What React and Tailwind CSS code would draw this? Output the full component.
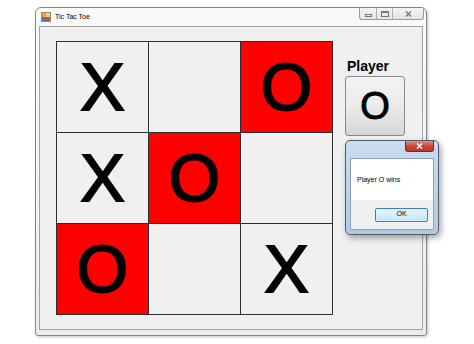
import React from "react";

const cells = [
  { v: "X", red: false },
  { v: "", red: false },
  { v: "O", red: true },
  { v: "X", red: false },
  { v: "O", red: true },
  { v: "", red: false },
  { v: "O", red: true },
  { v: "", red: false },
  { v: "X", red: false },
];

function FormIcon() {
  return (
    <svg width="10" height="10" viewBox="0 0 10 10">
      <rect x="0.5" y="0.5" width="9" height="9" fill="#fff" stroke="#8a8a8a" />
      <rect x="1" y="1" width="4" height="4" fill="#e8a33a" />
      <rect x="5" y="1" width="4" height="4" fill="#f4d35a" />
      <rect x="1" y="5" width="4" height="4" fill="#3a7fd0" />
      <rect x="5" y="5" width="4" height="4" fill="#d84a3a" />
    </svg>
  );
}

function TitleButtons() {
  return (
    <div className="flex h-[12px] rounded-b-[3px] border border-t-0 border-[#9a9a9a] bg-gradient-to-b from-[#f4f4f4] to-[#e4e4e4] overflow-hidden">
      <div className="w-[17px] flex items-center justify-center border-r border-[#b0b0b0]">
        <div className="w-[7px] h-[3px] border border-[#777] mt-[3px]" />
      </div>
      <div className="w-[16px] flex items-center justify-center border-r border-[#b0b0b0]">
        <div className="w-[8px] h-[6px] border border-[#777] border-t-2" />
      </div>
      <div className="w-[30px] flex items-center justify-center">
        <svg width="7" height="6" viewBox="0 0 7 6">
          <path d="M1 0.5 L6 5.5 M6 0.5 L1 5.5" stroke="#777" strokeWidth="1.4" />
        </svg>
      </div>
    </div>
  );
}

function MessageBox() {
  return (
    <div className="absolute left-[345px] top-[140px] w-[94px] h-[95px] rounded-[5px] border border-[#4f5d6e] bg-gradient-to-b from-[#c9dcf0] to-[#b2c9e3] shadow-[2px_3px_6px_rgba(0,0,0,0.35)] flex flex-col px-[4px] pb-[4px]">
      <div className="h-[17px] flex justify-end items-start">
        <div className="w-[29px] h-[11px] rounded-b-[3px] border border-t-0 border-[#7a2a22] bg-gradient-to-b from-[#e08a7e] via-[#c8473a] to-[#b8362a] flex items-center justify-center">
          <svg width="7" height="6" viewBox="0 0 7 6">
            <path d="M1 0.5 L6 5.5 M6 0.5 L1 5.5" stroke="#fff" strokeWidth="1.6" />
          </svg>
        </div>
      </div>
      <div className="flex-1 border border-[#8fa3ba] bg-[#f0f0f0] flex flex-col">
        <div className="h-[41px] bg-white flex items-center pl-[6px] pt-[2px] text-[7px] text-black">
          Player O wins
        </div>
        <div className="flex-1 flex items-center justify-end pr-[5px]">
          <div className="w-[53px] h-[14px] rounded-[2px] border border-[#3c7fb1] bg-gradient-to-b from-[#eaf6fd] to-[#bee6fd] flex items-center justify-center text-[7px] text-black shadow-[inset_0_0_0_1px_#d8f0fc]">
            OK
          </div>
        </div>
      </div>
    </div>
  );
}

export default function App() {
  return (
    <div className="relative w-[474px] h-[344px] bg-white overflow-hidden font-['Liberation_Sans',Arial,sans-serif]">
      <div className="pt-[7px] pl-[35px]">
        <div className="w-[392px] h-[329px] rounded-t-[6px] rounded-b-[3px] border border-[#858585] bg-gradient-to-b from-[#fafafa] to-[#ececec] shadow-[1px_1px_3px_rgba(0,0,0,0.25)] flex flex-col">
          <div className="h-[18px] flex items-start pl-[5px] pr-[2px]">
            <div className="flex items-center gap-[4px] mt-[4px]">
              <FormIcon />
              <span className="text-[7px] text-black">Tic Tac Toe</span>
            </div>
            <div className="ml-auto">
              <TitleButtons />
            </div>
          </div>
          <div className="flex-1 mx-[3px] mb-[5px] border border-[#a3a3a3] bg-[#f0f0f0] flex items-start pl-[16px] pt-[14px]">
            <div className="grid grid-cols-[91px_91px_91px] grid-rows-[90px_90px_90px] gap-px p-px bg-[#2e2e2e]">
              {cells.map((c, i) => (
                <div
                  key={i}
                  className={`flex items-center justify-center text-[66px] leading-none text-black [-webkit-text-stroke:2px_black] ${
                    c.red ? "bg-[#ff0000]" : "bg-[#f0f0f0]"
                  }`}
                >
                  {c.v}
                </div>
              ))}
            </div>
            <div className="ml-[12px] mt-[16px] flex flex-col">
              <div className="pl-[2px] text-[14px] font-bold leading-[18px] text-black">Player</div>
              <div className="mt-[1px] w-[60px] h-[60px] rounded-[3px] border border-[#8a8a8a] bg-gradient-to-b from-[#f3f3f3] via-[#ebebeb] to-[#d6d6d6] flex items-center justify-center text-[38px] leading-none text-black [-webkit-text-stroke:1px_black]">
                O
              </div>
            </div>
          </div>
        </div>
      </div>
      <MessageBox />
    </div>
  );
}
